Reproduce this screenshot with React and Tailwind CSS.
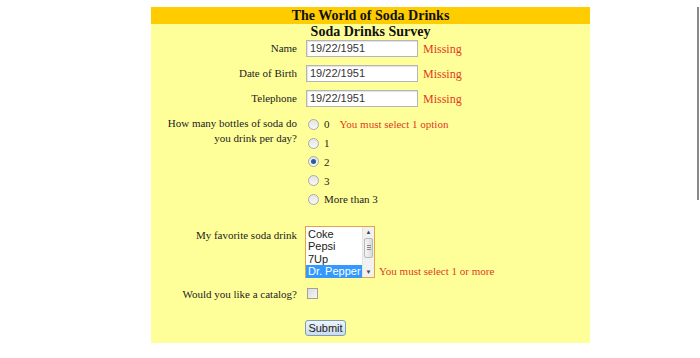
import React from "react";

/* ───────── bits ───────── */
const serif = "font-['Liberation_Serif','Times_New_Roman',serif]";
const sans = "font-['Liberation_Sans',Arial,sans-serif]";

function Radio({ checked }) {
  return (
    <span className="relative inline-block w-[11px] h-[11px] rounded-full border border-[#a9a9a9] bg-gradient-to-b from-[#e4e4e4] to-[#f8f8f8] shrink-0">
      {checked && (
        <span className="absolute left-[2px] top-[2px] w-[5px] h-[5px] rounded-full bg-[#2a5c9a]" />
      )}
    </span>
  );
}

function TextBox() {
  return (
    <div className={`w-[112px] h-[17px] border border-[#b5b5b5] bg-white pl-[3px] text-[11px] leading-[15px] text-[#333] ${sans} shadow-[inset_1px_1px_1px_rgba(0,0,0,0.12)]`}>
      19/22/1951
    </div>
  );
}

function Row({ label, children, className = "" }) {
  return (
    <div className={`flex ${className}`}>
      <div className="w-[154px] shrink-0 text-right pr-[8px]">{label}</div>
      <div className="flex-1">{children}</div>
    </div>
  );
}

const OPTIONS = ["0", "1", "2", "3", "More than 3"];

export default function App() {
  return (
    <div className={`relative w-[700px] h-[358px] bg-white ${serif} text-[11px] text-[#222]`}>
      <div className="absolute right-[1px] top-0 w-[2px] h-[193px] bg-[#8a8a8a]" />

      <div className="ml-[151px] mt-[7px] w-[439px] h-[336px] bg-[#ffff99]">
        <div className="h-[17px] bg-[#ffcc00] text-center font-bold text-[14px] leading-[17px] text-[#111]">
          The World of Soda Drinks
        </div>
        <div className="h-[16px] text-center font-bold text-[14px] leading-[16px] text-[#111]">
          Soda Drinks Survey
        </div>

        {/* text rows */}
        {["Name", "Date of Birth", "Telephone"].map((l, i) => (
          <Row key={l} label={l} className={`items-center h-[17px] ${i ? "mt-[8px]" : ""}`}>
            <div className="flex items-center">
              <div className="ml-[1px]"><TextBox /></div>
              <span className="ml-[5px] text-[12px] text-[#e03a24]">Missing</span>
            </div>
          </Row>
        ))}

        {/* radio question */}
        <Row
          className="mt-[8px]"
          label={<span className="block leading-[15px] pt-[1px]">How many bottles of soda do<br />you drink per day?</span>}
        >
          <div className="flex flex-col pl-[3px]">
            {OPTIONS.map((o, i) => (
              <div key={o} className="flex items-center h-[18.75px] leading-[14px]">
                <Radio checked={i === 2} />
                <span className="ml-[5px]">{o}</span>
                {i === 0 && <span className="ml-[10px] text-[#e03a24]">You must select 1 option</span>}
              </div>
            ))}
          </div>
        </Row>

        {/* list box */}
        <Row className="mt-[17px]" label={<span className="block pt-[1px]">My favorite soda drink</span>}>
          <div className="flex items-end">
            <div className={`relative w-[70px] h-[52px] border border-[#e2a54a] bg-white ${sans} text-[11px] leading-[12.5px] text-[#222]`}>
              <div className="pl-[2px] pt-[1px]">Coke</div>
              <div className="pl-[2px]">Pepsi</div>
              <div className="pl-[2px]">7Up</div>
              <div className="pl-[2px] w-[56px] bg-[#3399ff] text-white">Dr. Pepper</div>
              <div className="absolute right-0 top-0 w-[12px] h-full bg-[#f1f1f1] border-l border-[#e4e4e4] flex flex-col items-center">
                <span className="text-[6px] leading-[10px] text-[#444]">▲</span>
                <span className="mt-[1px] w-[9px] h-[20px] rounded-[2px] border border-[#b8b8b8] bg-gradient-to-r from-[#f4f4f4] to-[#dcdcdc] flex flex-col items-center justify-center gap-[1px]">
                  <span className="w-[4px] h-px bg-[#888]" />
                  <span className="w-[4px] h-px bg-[#888]" />
                  <span className="w-[4px] h-px bg-[#888]" />
                </span>
                <span className="mt-auto text-[6px] leading-[10px] text-[#444]">▼</span>
              </div>
            </div>
            <span className="ml-[4px] -mb-[2px] text-[#e03a24]">You must select 1 or more</span>
          </div>
        </Row>

        {/* checkbox */}
        <Row className="mt-[9px] items-center h-[14px]" label="Would you like a catalog?">
          <span className="block ml-[2px] w-[11px] h-[11px] border border-[#a0a0a0] bg-gradient-to-br from-[#dcdcdc] to-[#f6f6f6]" />
        </Row>

        {/* submit */}
        <Row className="mt-[19px]" label="">
          <button className={`w-[41px] h-[16px] rounded-[3px] border border-[#7f9db9] bg-gradient-to-b from-[#eef5fc] to-[#c9dcef] ${sans} text-[11px] leading-[13px] text-[#1a1a1a]`}>
            Submit
          </button>
        </Row>
      </div>
    </div>
  );
}
